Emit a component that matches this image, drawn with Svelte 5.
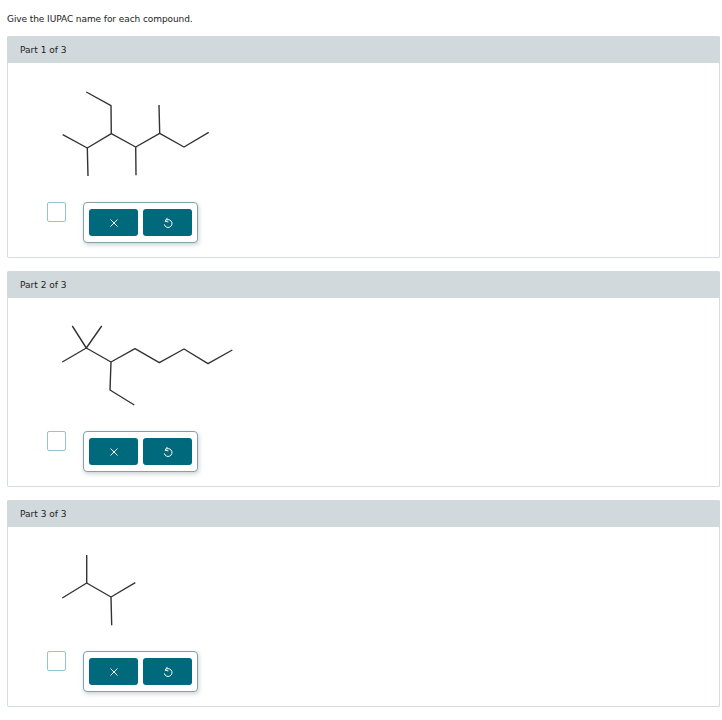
<script>
  const parts = [
    {
      title: 'Part 1 of 3',
      top: 63,
      height: 139,
      paths: [
        'M86.3 92 L111 105.7 L111.3 133.7 L87.3 148 L62.7 134.7',
        'M87.3 148 L88 176',
        'M111.3 133.7 L135.7 147 L136 175.3',
        'M135.7 147 L159.7 133.3 L159 105',
        'M159.7 133.3 L184 147 L208.7 132.3'
      ]
    },
    {
      title: 'Part 2 of 3',
      top: 298,
      height: 133,
      paths: [
        'M72.3 326 L86.3 348 L101.7 326',
        'M62.3 362 L86.3 348 L111 362 L110 390 L134.3 405',
        'M111 362 L135 348.7 L159.3 362.7 L184 349 L208 363.7 L232.3 350'
      ]
    },
    {
      title: 'Part 3 of 3',
      top: 527,
      height: 124,
      paths: [
        'M86.7 555 L86.7 583 L62.3 598',
        'M86.7 583 L111 597 L111.7 625.3',
        'M111 597 L135.3 582.7'
      ]
    }
  ];
</script>

<main class="page">
  <p class="prompt">Give the IUPAC name for each compound.</p>

  {#each parts as part}
    <section class="panel">
      <h2 class="panel-head">{part.title}</h2>
      <svg
        class="molecule"
        width="300"
        height={part.height}
        viewBox="8 {part.top} 300 {part.height}"
        aria-hidden="true"
      >
        {#each part.paths as d}
          <path {d} />
        {/each}
      </svg>
      <div class="answer">
        <span class="checkbox"></span>
        <div class="toolbar">
          <button type="button" aria-label="Clear">
            <svg width="10" height="10" viewBox="0 0 10 10">
              <path d="M1.5 1.5 L8.5 8.5 M8.5 1.5 L1.5 8.5" />
            </svg>
          </button>
          <button type="button" aria-label="Undo">
            <svg width="12" height="12" viewBox="0 0 12 12">
              <path d="M3 4.2 A3.9 3.9 0 1 1 2.3 7.4" />
              <path d="M5.4 0.9 L3 4.2 L6.4 5" />
            </svg>
          </button>
        </div>
      </div>
    </section>
  {/each}
</main>

<style>
  :global(body) {
    margin: 0;
    background: #fff;
  }

  .page {
    padding: 13px 2px 0 7px;
    font-family: "DejaVu Sans", Verdana, sans-serif;
    color: #222;
  }

  .prompt {
    margin: 0 0 12px;
    font-size: 9px;
    line-height: 11px;
    letter-spacing: -0.08px;
    position: relative;
    top: 0.5px;
  }

  .panel {
    margin-bottom: 13px;
    border: 1px solid #d5dcde;
    border-top: 0;
    border-radius: 2px;
    padding-bottom: 14px;
  }

  .panel-head {
    margin: 0 -1px;
    height: 27px;
    padding: 9px 0 0 13px;
    box-sizing: border-box;
    background: #d1d9dc;
    border-radius: 2px 2px 0 0;
    font-size: 9px;
    line-height: 11px;
    font-weight: 400;
    color: #1c1c1c;
  }

  .molecule {
    display: block;
  }

  .molecule path {
    fill: none;
    stroke: #333;
    stroke-width: 1.4;
    stroke-linejoin: round;
  }

  .answer {
    display: flex;
    align-items: flex-start;
    gap: 17px;
    padding-left: 39px;
  }

  .checkbox {
    width: 19px;
    height: 20px;
    box-sizing: border-box;
    border: 1px solid #93c4cf;
    border-radius: 2px;
    background: #fff;
  }

  .toolbar {
    display: flex;
    gap: 5px;
    padding: 6px 5px;
    border: 1px solid #84a0a9;
    border-radius: 4px;
    background: #fff;
    box-shadow: 1px 2px 4px rgba(60, 80, 90, 0.25);
  }

  .toolbar button {
    display: flex;
    align-items: center;
    justify-content: center;
    width: 49px;
    height: 27px;
    padding: 0;
    border: 0;
    border-radius: 3px;
    background: #00697b;
  }

  .toolbar svg path {
    fill: none;
    stroke: #fff;
    stroke-width: 1;
  }
</style>
